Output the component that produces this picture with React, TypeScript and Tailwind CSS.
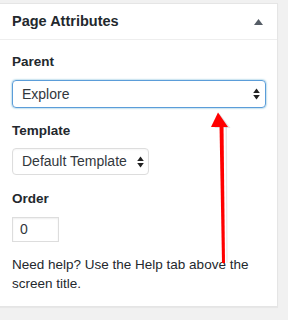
import React from 'react';

const font = { fontFamily: '"Liberation Sans", Arial, sans-serif' };

const UpDown = () => (
  <svg width="7" height="12" viewBox="0 0 7 12" className="shrink-0">
    <path d="M3.5 0.5 L6.8 5 L0.2 5 Z" fill="#222" />
    <path d="M3.5 11.5 L6.8 7 L0.2 7 Z" fill="#222" />
  </svg>
);

export default function App() {
  return (
    <div className="relative h-[320px] w-[288px] overflow-hidden bg-[#f1f1f1] pt-[3px] text-[#23282d]" style={font}>
      <div className="w-[278px] border border-l-0 border-[#e5e5e5] bg-white shadow-[0_1px_1px_rgba(0,0,0,0.04)]">
        <div className="flex h-[36px] items-center justify-between border-b border-[#eee] pl-3 pr-[14px]">
          <h2 className="text-[14.5px] font-bold">Page Attributes</h2>
          <svg width="9" height="6" viewBox="0 0 9 6">
            <path d="M4.5 0 L9 6 L0 6 Z" fill="#555d66" />
          </svg>
        </div>
        <div className="flex flex-col px-3 pb-[13px] pt-[12px] text-[13px]">
          <label className="text-[13.5px] font-bold leading-[20px]">Parent</label>
          <div className="mt-2 flex h-[28px] w-[254px] items-center justify-between rounded-[4px] border border-[#5b9dd9] pl-[9px] pr-[5px] text-[14px] text-[#32373c] shadow-[0_0_2px_rgba(30,140,190,0.8)]">
            <span>Explore</span>
            <UpDown />
          </div>
          <label className="mt-[13px] text-[13.5px] font-bold leading-[20px]">Template</label>
          <div className="mt-[7px] flex h-[27px] w-[137px] items-center justify-between rounded-[4px] border border-[#ddd] pl-[9px] pr-[4px] text-[14px] text-[#32373c] shadow-[inset_0_1px_2px_rgba(0,0,0,0.04)]">
            <span>Default Template</span>
            <UpDown />
          </div>
          <label className="mt-[14px] text-[13.5px] font-bold leading-[20px]">Order</label>
          <div className="mt-2 flex h-[25px] w-[47px] items-center border border-[#ddd] pl-[7px] text-[14px] text-[#32373c] shadow-[inset_0_1px_2px_rgba(0,0,0,0.07)]">
            0
          </div>
          <p className="mt-[13px] text-[13.5px] leading-[19px]">
            Need help? Use the Help tab above the screen title.
          </p>
        </div>
      </div>
      <svg className="pointer-events-none absolute left-0 top-0" width="288" height="320" viewBox="0 0 288 320">
        <path d="M225.5 127 L226.5 263 L227.5 263 L227 127 Z" fill="rgba(0,0,0,0.1)" />
        <path d="M218 112.5 L229 127 L213 127 Z" fill="rgba(0,0,0,0.1)" transform="translate(1.5 1)" />
        <path d="M219.5 125 L222 263 L225 263 L223.5 125 Z" fill="#ff0000" />
        <path d="M218 112.5 L228 127 L211 127 Z" fill="#ff0000" />
      </svg>
    </div>
  );
}
